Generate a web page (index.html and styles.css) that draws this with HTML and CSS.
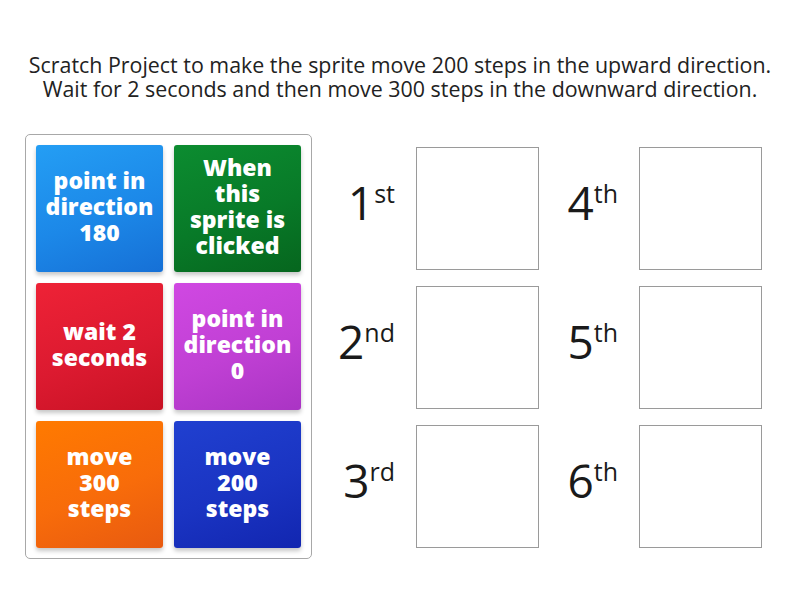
FILE: index.html
```html
<!DOCTYPE html>
<html lang="en">
<head>
<meta charset="utf-8">
<title>Scratch Project</title>
<link rel="stylesheet" href="styles.css">
</head>
<body>
<div class="page">
  <h1 class="title">Scratch Project to make the sprite move 200 steps in the upward direction.<br>Wait for 2 seconds and then move 300 steps in the downward direction.</h1>
  <div class="main">
    <div class="panel">
      <div class="tile t-blue">point in direction 180</div>
      <div class="tile t-green">When this sprite is clicked</div>
      <div class="tile t-red">wait 2 seconds</div>
      <div class="tile t-purple">point in direction 0</div>
      <div class="tile t-orange">move 300 steps</div>
      <div class="tile t-navy">move 200 steps</div>
    </div>
    <div class="slots">
      <div class="col">
        <div class="slot"><div class="label">1<span class="sup">st</span></div><div class="box"></div></div>
        <div class="slot"><div class="label">2<span class="sup">nd</span></div><div class="box"></div></div>
        <div class="slot"><div class="label">3<span class="sup">rd</span></div><div class="box"></div></div>
      </div>
      <div class="col">
        <div class="slot"><div class="label">4<span class="sup">th</span></div><div class="box"></div></div>
        <div class="slot"><div class="label">5<span class="sup">th</span></div><div class="box"></div></div>
        <div class="slot"><div class="label">6<span class="sup">th</span></div><div class="box"></div></div>
      </div>
    </div>
  </div>
</div>
</body>
</html>
```

FILE: styles.css
```css
html, body {
  margin: 0;
  padding: 0;
  background: #ffffff;
}
body {
  font-family: "Open Sans", "Noto Sans", sans-serif;
  color: #1a1a1a;
}
.page {
  width: 800px;
  height: 600px;
  padding-top: 53px;
  box-sizing: border-box;
}
.title {
  margin: 0;
  font-size: 21.4px;
  font-weight: 400;
  line-height: 24px;
  text-align: center;
  color: #222;
  white-space: nowrap;
}
.main {
  display: flex;
  margin-top: 33px;
  padding-left: 25px;
}
.panel {
  display: grid;
  grid-template-columns: 127px 127px;
  grid-auto-rows: 127px;
  column-gap: 11px;
  row-gap: 11px;
  padding: 10px;
  border: 1px solid #a8a8a8;
  border-radius: 5px;
}
.tile {
  display: flex;
  align-items: center;
  justify-content: center;
  text-align: center;
  padding: 0 9px 5px;
  color: #fff;
  font-family: "Open Sans", sans-serif;
  font-weight: 800;
  font-size: 23px;
  line-height: 26px;
  border-radius: 3px;
  box-shadow: 0 3px 4px rgba(0, 0, 0, 0.22);
}
.t-blue { background: linear-gradient(160deg, #249ef4 0%, #1c88e8 55%, #1670d6 100%); }
.t-green { background: linear-gradient(160deg, #0c8c30 0%, #087a28 55%, #06661e 100%); }
.t-red { background: linear-gradient(160deg, #ee2236 0%, #dc1a30 55%, #c81224 100%); }
.t-purple { background: linear-gradient(160deg, #d048e2 0%, #c040d4 55%, #aa34c4 100%); }
.t-orange { background: linear-gradient(160deg, #ff7a00 0%, #f86c0a 55%, #e85a10 100%); }
.t-navy { background: linear-gradient(160deg, #2040d0 0%, #1a34c2 55%, #1226b0 100%); }

.slots {
  display: flex;
  margin-left: 4px;
  padding-top: 13px;
}
.col {
  display: flex;
  flex-direction: column;
  gap: 16px;
}
.slot {
  display: flex;
  align-items: center;
}
.label {
  width: 79px;
  margin-right: 21px;
  text-align: right;
  font-size: 46px;
  line-height: 50px;
  color: #1a1a1a;
  padding-bottom: 14px;
  white-space: nowrap;
}
.sup {
  font-size: 25px;
  vertical-align: 17px;
  line-height: 22px;
}
.box {
  width: 121px;
  height: 121px;
  border: 1px solid #9a9a9a;
  background: #fff;
}
```
